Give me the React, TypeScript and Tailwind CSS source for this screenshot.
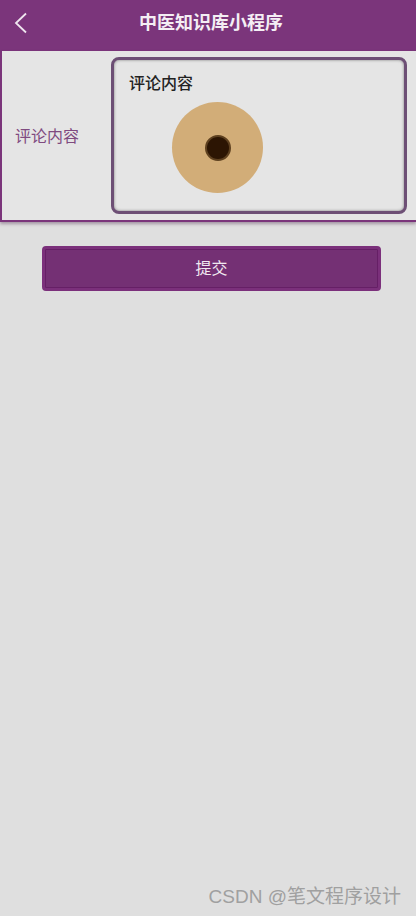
export default function App() {
  return (
    <div className="relative flex h-[916px] w-[416px] flex-col overflow-hidden bg-[#dfdfdf] font-['Liberation_Sans','Noto_Sans_CJK_SC',sans-serif]">
      <header className="flex h-[51px] shrink-0 items-center bg-[#7b357b] pb-[5px]">
        <svg className="ml-[14px] h-[22px] w-[13px]" viewBox="0 0 13 22" fill="none">
          <path d="M12 1.5 2 11l10 9.5" stroke="#efe6ef" strokeWidth="1.8" />
        </svg>
        <h1 className="ml-[112px] text-[18px] font-bold text-[#f4eef4]">中医知识库小程序</h1>
      </header>

      <section className="flex h-[171px] shrink-0 border-b-2 border-l-2 border-[#7b357b] bg-[#e5e5e5] pt-[6px] pr-[9px] pb-[6px] shadow-[0_2px_3px_rgba(90,60,90,0.45)]">
        <div className="flex w-[109px] shrink-0 items-center pl-[13px] pt-[3px] text-[16px] text-[#7f4a80]">评论内容</div>
        <div className="relative flex-1 rounded-[8px] border-[3px] border-[#6d4f75] bg-[#e5e5e5] px-[15px] pt-[13px] shadow-[inset_0_0_3px_rgba(60,60,60,0.6)]">
          <p className="text-[16px] leading-[22px] font-medium text-[#222222]">评论内容</p>
          <div className="absolute top-[42px] left-[58px] flex h-[91px] w-[91px] items-center justify-center rounded-full bg-[#d2ad78]">
            <div className="h-[26px] w-[26px] rounded-full border-2 border-[#5e4120] bg-[#2c1503]" />
          </div>
        </div>
      </section>

      <button className="mt-[24px] ml-[42px] flex h-[45px] w-[339px] items-center justify-center rounded-[4px] border-[3px] border-[#7b307b] bg-[#743074] text-[16px] text-[#f1e9f1] shadow-[inset_0_0_0_1px_#661f66]">
        提交
      </button>

      <span className="absolute right-[15px] bottom-[8px] text-[19px] leading-[22px] text-[#a0a0a0]">CSDN @笔文程序设计</span>
    </div>
  )
}
